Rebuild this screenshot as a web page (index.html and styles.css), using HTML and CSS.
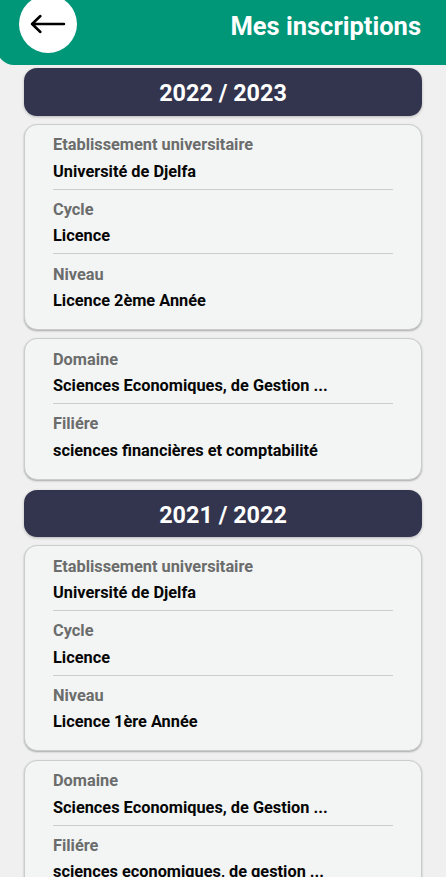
FILE: index.html
```html
<!DOCTYPE html>
<html lang="fr">
<head>
<meta charset="utf-8">
<meta name="viewport" content="width=device-width, initial-scale=1">
<title>Mes inscriptions</title>
<link rel="stylesheet" href="styles.css">
</head>
<body>
<header class="topbar">
  <button class="back" aria-label="Retour">
    <svg width="36" height="20" viewBox="0 0 36 20" fill="none" stroke="#000" stroke-width="2.5" stroke-linecap="round" stroke-linejoin="round"><path d="M34 10H2M10.4 2L2.1 10L10.4 18"/></svg>
  </button>
  <h1 class="title">Mes inscriptions</h1>
</header>
<main class="list">
  <section class="year">
    <h2 class="year-label">2022 / 2023</h2>
    <dl class="card">
      <div class="row"><dt>Etablissement universitaire</dt><dd>Université de Djelfa</dd></div>
      <div class="row"><dt>Cycle</dt><dd>Licence</dd></div>
      <div class="row"><dt>Niveau</dt><dd>Licence 2ème Année</dd></div>
    </dl>
    <dl class="card">
      <div class="row"><dt>Domaine</dt><dd>Sciences Economiques, de Gestion ...</dd></div>
      <div class="row"><dt>Filiére</dt><dd>sciences financières et comptabilité</dd></div>
    </dl>
  </section>
  <section class="year">
    <h2 class="year-label">2021 / 2022</h2>
    <dl class="card">
      <div class="row"><dt>Etablissement universitaire</dt><dd>Université de Djelfa</dd></div>
      <div class="row"><dt>Cycle</dt><dd>Licence</dd></div>
      <div class="row"><dt>Niveau</dt><dd>Licence 1ère Année</dd></div>
    </dl>
    <dl class="card">
      <div class="row"><dt>Domaine</dt><dd>Sciences Economiques, de Gestion ...</dd></div>
      <div class="row"><dt>Filiére</dt><dd>sciences economiques, de gestion ...</dd></div>
    </dl>
  </section>
</main>
</body>
</html>
```
FILE: styles.css
```css
* { box-sizing: border-box; }
html, body { height: 100%; }
body {
  margin: 0;
  overflow: hidden;
  display: flex;
  flex-direction: column;
  background: #f0f0f0;
  font-family: Roboto, "Liberation Sans", sans-serif;
}
h1, h2, dl, dt, dd { margin: 0; }
.topbar {
  flex: none;
  height: 65px;
  margin-left: -3px;
  padding: 0 25px 0 22px;
  display: flex;
  justify-content: space-between;
  align-items: flex-start;
  background: #009678;
  border-bottom-left-radius: 17px;
}
.back {
  width: 58px;
  height: 58px;
  margin-top: -4.6px;
  padding: 0;
  border: 0;
  border-radius: 50%;
  background: #fff;
  display: flex;
  align-items: center;
  justify-content: center;
}
.title {
  font-size: 25.5px;
  line-height: 30px;
  padding-top: 11px;
  font-weight: 700;
  color: #fff;
}
.list {
  flex: 1;
  min-height: 0;
  overflow: hidden;
  padding: 3.4px 24px 0;
}
.year { padding-bottom: 10.1px; }
.year-label {
  height: 47.2px;
  border-radius: 13px;
  background: #33344e;
  box-shadow: 0 1px 3px rgba(0, 0, 0, .25);
  color: #fff;
  font-size: 23.4px;
  font-weight: 700;
  line-height: 50.6px;
  text-align: center;
}
.card {
  margin-top: 8.4px;
  padding: 7.4px 28px 14.4px;
  border: 1px solid #cbcdcc;
  border-radius: 13px;
  background: #f3f5f4;
  box-shadow: 0 1px 2px rgba(0, 0, 0, .3);
  font-size: 16.33px;
  font-weight: 700;
  line-height: 26.5px;
}
.row + .row {
  margin-top: 3.5px;
  padding-top: 7.1px;
  border-top: 1px solid #cbcdcc;
}
.row dt { color: #6b6c6c; }
.row dd { color: #060606; white-space: nowrap; }
```
